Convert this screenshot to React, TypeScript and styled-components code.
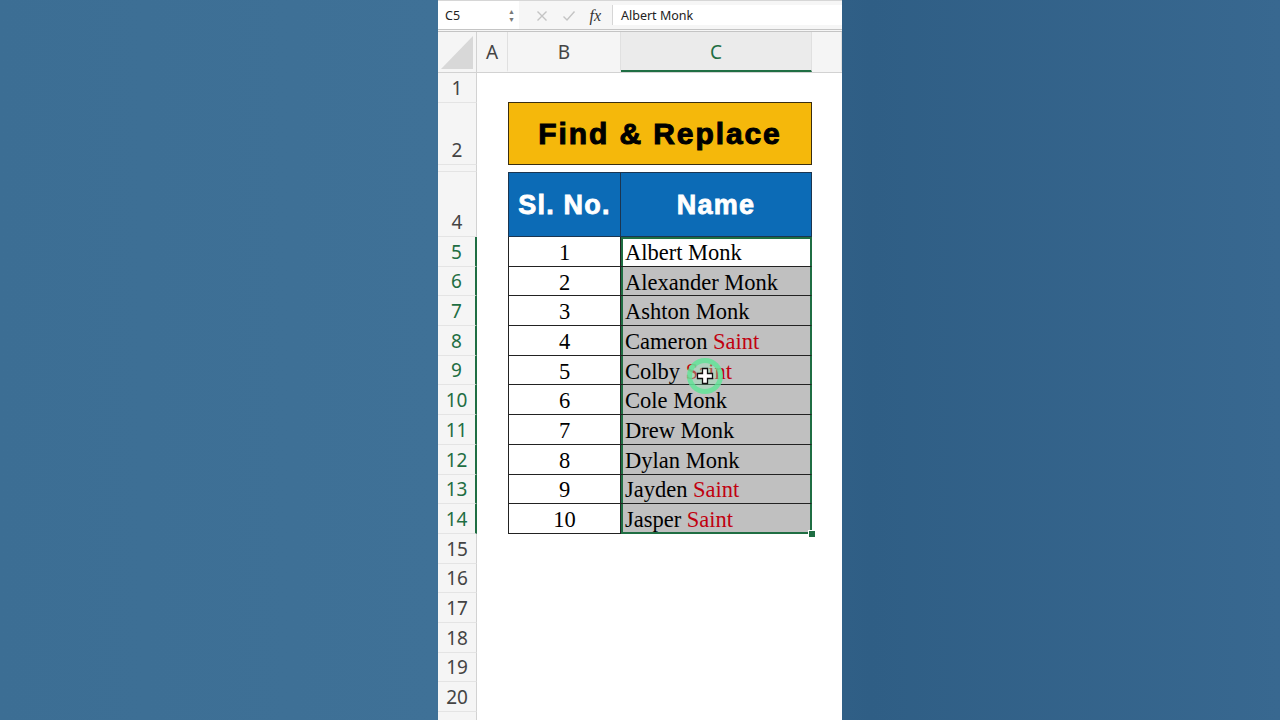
import styled, { createGlobalStyle } from "styled-components";

const GlobalStyle = createGlobalStyle`
  html, body {
    margin: 0;
    padding: 0;
    width: 1280px;
    height: 720px;
    overflow: hidden;
  }
  * {
    box-sizing: border-box;
  }
`;

const GREEN = "#1f6e43";
const ROW_H = 29.7;

const Page = styled.div`
  width: 1280px;
  height: 720px;
  display: flex;
  justify-content: center;
  background: linear-gradient(
    90deg,
    #3c6e94 0%,
    #3f7197 34%,
    #2f5e85 68%,
    #386890 100%
  );
`;

const Sheet = styled.div`
  position: relative;
  width: 404px;
  height: 720px;
  background: #fff;
  display: flex;
  flex-direction: column;
  overflow: hidden;
  font-family: "Noto Sans", "Open Sans", sans-serif;
`;

const FormulaBar = styled.div`
  flex-shrink: 0;
  height: 32px;
  display: flex;
  align-items: stretch;
  background: #f6f6f6;
  border-top: 1px solid #d6d6d6;
  border-bottom: 3px double #c4c4c4;
`;

const NameBox = styled.div`
  width: 81px;
  display: flex;
  align-items: center;
  justify-content: space-between;
  padding: 1px 4px 0 7px;
  background: #fff;
  font-size: 12.5px;
  color: #222;
`;

const Spinner = styled.div`
  display: flex;
  flex-direction: column;
  font-size: 7px;
  line-height: 8px;
  color: #777;
`;

const Tools = styled.div`
  width: 93px;
  display: flex;
  align-items: center;
  justify-content: space-around;
  padding: 1px 4px 0 10px;
`;

const Fx = styled.span`
  font-family: "Liberation Serif", serif;
  font-style: italic;
  font-size: 16px;
  color: #333;
`;

const FormulaInput = styled.div`
  flex: 1;
  display: flex;
  align-items: center;
  padding: 1px 0 0 8px;
  margin: 4px 0;
  border-left: 1px solid #d6d6d6;
  background: #fff;
  font-size: 12.5px;
  color: #222;
`;

const COLS = "39px 31px 113px 191px 1fr";

const HeaderRow = styled.div`
  flex-shrink: 0;
  display: grid;
  grid-template-columns: ${COLS};
  height: 41px;
  background: #f5f5f5;
  border-bottom: 1px solid #d2d2d2;
`;

const Corner = styled.div`
  border-right: 1px solid #d2d2d2;
  svg {
    display: block;
  }
`;

const ColHead = styled.div<{ $active?: boolean }>`
  display: flex;
  align-items: center;
  justify-content: center;
  padding-top: 2px;
  font-size: 19px;
  color: ${(p) => (p.$active ? GREEN : "#444")};
  background: ${(p) => (p.$active ? "#ebebeb" : "#f5f5f5")};
  border-right: 1px solid #e0e0e0;
  border-bottom: 2px solid ${(p) => (p.$active ? GREEN : "transparent")};
`;

const Grid = styled.div`
  flex-shrink: 0;
  display: grid;
  grid-template-columns: ${COLS};
  grid-template-rows: 30px 62px 7px 65px repeat(17, ${ROW_H}px);
`;

const RowHead = styled.div<{ $active?: boolean }>`
  display: flex;
  align-items: flex-end;
  justify-content: center;
  line-height: 28px;
  font-size: 19px;
  background: #f5f5f5;
  color: ${(p) => (p.$active ? GREEN : "#444")};
  border-bottom: 1px solid #e4e4e4;
  border-right: ${(p) => (p.$active ? `2px solid ${GREEN}` : "1px solid #d2d2d2")};
`;

const Blank = styled.div``;

const TitleCell = styled.div`
  grid-column: 3 / span 2;
  margin-top: -1px;
  display: flex;
  align-items: center;
  justify-content: center;
  padding-top: 1px;
  background: #f5b80b;
  border: 1px solid #3a2e10;
  font-family: "Liberation Sans", Arial, sans-serif;
  font-weight: 900;
  font-size: 30px;
  letter-spacing: 1.9px;
  -webkit-text-stroke: 1px #000;
  color: #000;
`;

const HeadCell = styled.div<{ $first?: boolean }>`
  display: flex;
  align-items: center;
  justify-content: center;
  padding-top: 2px;
  background: #0c6bb6;
  border: 1px solid #1b3550;
  border-left-width: ${(p) => (p.$first ? "1px" : "0")};
  font-family: "Liberation Sans", Arial, sans-serif;
  font-weight: 700;
  font-size: 27px;
  letter-spacing: 1.2px;
  -webkit-text-stroke: 0.8px #fff;
  color: #fff;
`;

const NumCell = styled.div`
  display: flex;
  align-items: center;
  justify-content: center;
  padding-top: 3px;
  background: #fff;
  border: 1px solid #222;
  border-top: 0;
  font-family: "Liberation Serif", "Times New Roman", serif;
  font-size: 22.5px;
  color: #000;
`;

// Column C cells carry the green selection frame (C5:C14) as inset shadows
const NameCell = styled.div<{ $shade?: boolean; $top?: boolean; $bottom?: boolean }>`
  position: relative;
  display: flex;
  align-items: center;
  padding: 3px 0 0 4px;
  background: ${(p) => (p.$shade ? "#c0c0c0" : "#fff")};
  border-right: 1px solid ${GREEN};
  border-bottom: 1px solid ${(p) => (p.$bottom ? GREEN : "#222")};
  box-shadow: inset 2px 0 0 ${GREEN}, inset -1px 0 0 ${GREEN}
    ${(p) => (p.$top ? `, inset 0 2px 0 ${GREEN}` : "")}
    ${(p) => (p.$bottom ? `, inset 0 -1px 0 ${GREEN}` : "")};
  font-family: "Liberation Serif", "Times New Roman", serif;
  font-size: 22.5px;
  color: #000;
  white-space: nowrap;
`;

const Red = styled.span`
  color: #c00010;
`;

const FillHandle = styled.div`
  position: absolute;
  right: -5px;
  bottom: -5px;
  width: 8px;
  height: 8px;
  background: ${GREEN};
  border: 1px solid #fff;
  z-index: 2;
`;

const Cursor = styled.div`
  position: absolute;
  left: 249px;
  top: 358px;
  width: 36px;
  height: 36px;
  border-radius: 50%;
  border: 5px solid rgba(96, 226, 150, 0.8);
  background: rgba(150, 240, 190, 0.35);
  display: flex;
  align-items: center;
  justify-content: center;
  z-index: 3;
  svg {
    display: block;
  }
`;

type Person = { first: string; last: string };

const PEOPLE: Person[] = [
  { first: "Albert", last: "Monk" },
  { first: "Alexander", last: "Monk" },
  { first: "Ashton", last: "Monk" },
  { first: "Cameron", last: "Saint" },
  { first: "Colby", last: "Saint" },
  { first: "Cole", last: "Monk" },
  { first: "Drew", last: "Monk" },
  { first: "Dylan", last: "Monk" },
  { first: "Jayden", last: "Saint" },
  { first: "Jasper", last: "Saint" },
];

const EmptyRow = ({ n }: { n?: number }) => (
  <>
    <RowHead>{n}</RowHead>
    <Blank />
    <Blank />
    <Blank />
    <Blank />
  </>
);

function DataRow({ index, person }: { index: number; person: Person }) {
  const last = index === PEOPLE.length - 1;
  return (
    <>
      <RowHead $active>{index + 5}</RowHead>
      <Blank />
      <NumCell>{index + 1}</NumCell>
      <NameCell $shade={index > 0} $top={index === 0} $bottom={last}>
        {person.first}&nbsp;
        {person.last === "Saint" ? <Red>{person.last}</Red> : person.last}
        {last && <FillHandle />}
      </NameCell>
      <Blank />
    </>
  );
}

export default function App() {
  return (
    <Page>
      <GlobalStyle />
      <Sheet>
        <FormulaBar>
          <NameBox>
            <span>C5</span>
            <Spinner>
              <span>▲</span>
              <span>▼</span>
            </Spinner>
          </NameBox>
          <Tools>
            <svg width="12" height="12" viewBox="0 0 12 12">
              <path d="M1.5 1.5 L10.5 10.5 M10.5 1.5 L1.5 10.5" stroke="#c4c4c4" strokeWidth="1.4" />
            </svg>
            <svg width="14" height="12" viewBox="0 0 14 12">
              <path d="M1.5 6.5 L5 10 L12.5 1.5" stroke="#c4c4c4" strokeWidth="1.4" fill="none" />
            </svg>
            <Fx>fx</Fx>
          </Tools>
          <FormulaInput>Albert Monk</FormulaInput>
        </FormulaBar>

        <HeaderRow>
          <Corner>
            <svg width="38" height="40" viewBox="0 0 38 40">
              <polygon points="35,4 35,37 3,37" fill="#d8d8d8" />
            </svg>
          </Corner>
          <ColHead>A</ColHead>
          <ColHead>B</ColHead>
          <ColHead $active>C</ColHead>
          <ColHead />
        </HeaderRow>

        <Grid>
          <EmptyRow n={1} />

          <RowHead>2</RowHead>
          <Blank />
          <TitleCell>Find &amp; Replace</TitleCell>
          <Blank />

          <EmptyRow />

          <RowHead>4</RowHead>
          <Blank />
          <HeadCell $first>Sl. No.</HeadCell>
          <HeadCell>Name</HeadCell>
          <Blank />

          {PEOPLE.map((p, i) => (
            <DataRow key={p.first} index={i} person={p} />
          ))}

          {[15, 16, 17, 18, 19, 20, 21].map((n) => (
            <EmptyRow key={n} n={n} />
          ))}
        </Grid>

        <Cursor>
          <svg width="18" height="18" viewBox="0 0 18 18">
            <path
              d="M6.5 1.5 H11.5 V6.5 H16.5 V11.5 H11.5 V16.5 H6.5 V11.5 H1.5 V6.5 H6.5 Z"
              fill="#fff"
              stroke="#111"
              strokeWidth="1.3"
            />
          </svg>
        </Cursor>
      </Sheet>
    </Page>
  );
}
